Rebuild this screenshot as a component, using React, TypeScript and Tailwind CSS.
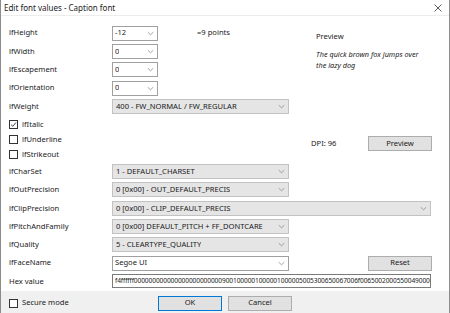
import React from "react";

const Chevron = () => (
  <svg width="7" height="5" viewBox="0 0 7 5" className="shrink-0">
    <path d="M0.8 1.2 L3.5 3.8 L6.2 1.2" fill="none" stroke="#8a8a8a" strokeWidth="0.8" />
  </svg>
);

const EditCombo = ({ value, w }: { value: string; w: string }) => (
  <div className={`${w} h-[15px] bg-white border border-[#a0a0a0] flex items-center pl-[2px] pr-[3px] justify-between`}>
    <span className="truncate">{value}</span>
    <Chevron />
  </div>
);

const ListCombo = ({ value, w }: { value: string; w: string }) => (
  <div className={`${w} h-[15px] bg-[#e5e5e5] border border-[#c2c2c2] flex items-center pl-[3px] pr-[3px] justify-between`}>
    <span className="truncate">{value}</span>
    <Chevron />
  </div>
);

const Check = ({ checked }: { checked?: boolean }) => (
  <div className="w-[9px] h-[9px] border border-[#333] bg-white flex items-center justify-center shrink-0">
    {checked && (
      <svg width="7" height="7" viewBox="0 0 7 7">
        <path d="M1 3.6 L2.8 5.3 L6 1.5" fill="none" stroke="#333" strokeWidth="0.9" />
      </svg>
    )}
  </div>
);

const Row = ({ label, children, h = "h-[18.3px]" }: { label: string; children?: React.ReactNode; h?: string }) => (
  <div className={`flex items-center ${h}`}>
    <div className="w-[103px] shrink-0">{label}</div>
    {children}
  </div>
);

const Btn = ({ label, primary }: { label: string; primary?: boolean }) => (
  <div
    className={`w-[64px] h-[15px] shrink-0 flex items-center justify-center bg-[#e1e1e1] border ${
      primary ? "border-[#0078d7]" : "border-[#adadad]"
    }`}
  >
    {label}
  </div>
);

const hex =
  "f4ffffff000000000000000000000000900100000100000100000500530065006700" +
  "6f00650020005500490000000000000000000000";

export default function App() {
  return (
    <div
      className="w-[450px] h-[313px] bg-white text-[#1a1a1a] border-l border-r border-[#8c8c8c] flex flex-col overflow-hidden relative"
      style={{ fontFamily: '"Noto Sans", "Open Sans", sans-serif', fontSize: "7.6px" }}
    >
      {/* title bar */}
      <div className="h-[16px] flex items-center justify-between pl-[3px] pr-[7px] border-b border-[#ededed] shrink-0">
        <span className="text-[8px] text-[#222]">Edit font values - Caption font</span>
        <svg width="8" height="8" viewBox="0 0 8 8">
          <path d="M0.5 0.5 L7.5 7.5 M7.5 0.5 L0.5 7.5" stroke="#333" strokeWidth="0.8" />
        </svg>
      </div>

      {/* body */}
      <div className="flex-1 pl-[8px] pt-[8px]">
        {/* top section */}
        <div className="flex">
          <div className="flex flex-col">
            <Row label="lfHeight">
              <EditCombo value="-12" w="w-[46px]" />
              <span className="ml-[39px]">=9 points</span>
            </Row>
            <Row label="lfWidth">
              <EditCombo value="0" w="w-[46px]" />
            </Row>
            <Row label="lfEscapement">
              <EditCombo value="0" w="w-[46px]" />
            </Row>
            <Row label="lfOrientation">
              <EditCombo value="0" w="w-[46px]" />
            </Row>
            <Row label="lfWeight">
              <ListCombo value="400 - FW_NORMAL / FW_REGULAR" w="w-[177px]" />
            </Row>
          </div>
          <div className="ml-[27px] pt-[7px] flex flex-col">
            <div>Preview</div>
            <div className="italic mt-[7px] leading-[10.5px] w-[108px] text-[7.3px]">
              The quick brown fox jumps over the lazy dog
            </div>
          </div>
        </div>

        {/* checkboxes */}
        <div className="flex items-center">
          <div className="flex flex-col w-[302px]">
            <div className="flex items-center gap-[4px] h-[15px] mt-[2px]">
              <Check checked />
              <span>lfItalic</span>
            </div>
            <div className="flex items-center gap-[4px] h-[15px]">
              <Check />
              <span>lfUnderline</span>
            </div>
            <div className="flex items-center gap-[4px] h-[15px]">
              <Check />
              <span>lfStrikeout</span>
            </div>
          </div>
          <div className="w-[57px] pt-[9px]">DPI: 96</div>
          <div className="pt-[9px]">
            <Btn label="Preview" />
          </div>
        </div>

        {/* lower rows */}
        <div className="flex flex-col">
          <Row label="lfCharSet">
            <ListCombo value="1 - DEFAULT_CHARSET" w="w-[177px]" />
          </Row>
          <Row label="lfOutPrecision">
            <ListCombo value="0 [0x00] - OUT_DEFAULT_PRECIS" w="w-[177px]" />
          </Row>
          <Row label="lfClipPrecision">
            <ListCombo value="0 [0x00] - CLIP_DEFAULT_PRECIS" w="w-[319px]" />
          </Row>
          <Row label="lfPitchAndFamily">
            <ListCombo value="0 [0x00] DEFAULT_PITCH + FF_DONTCARE" w="w-[177px]" />
          </Row>
          <Row label="lfQuality">
            <ListCombo value="5 - CLEARTYPE_QUALITY" w="w-[177px]" />
          </Row>
          <Row label="lfFaceName">
            <EditCombo value="Segoe UI" w="w-[177px]" />
            <div className="ml-[79px]">
              <Btn label="Reset" />
            </div>
          </Row>
          <Row label="Hex value">
            <div className="w-[319px] h-[14px] border border-[#7a7a7a] bg-white flex items-center pl-[2px] overflow-hidden whitespace-nowrap text-[6.6px] tracking-[-0.1px]">
              <span className="block overflow-hidden">{hex}</span>
            </div>
          </Row>
        </div>
      </div>

      {/* footer */}
      <div className="h-[25px] bg-[#f0f0f0] shrink-0 flex items-start pt-[5px] pl-[8px] border-b border-dashed border-[#7a7a7a]">
        <div className="flex items-center gap-[4px] w-[149px] shrink-0 h-[15px]">
          <Check />
          <span>Secure mode</span>
        </div>
        <Btn label="OK" primary />
        <div className="ml-[6px]">
          <Btn label="Cancel" />
        </div>
      </div>
    </div>
  );
}
